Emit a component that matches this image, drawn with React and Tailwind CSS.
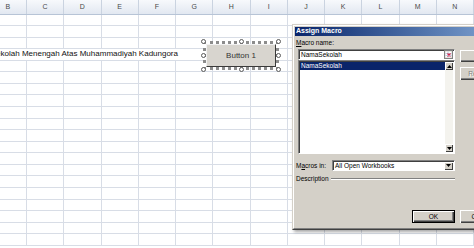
import React from 'react'

const COLS = ['B', 'C', 'D', 'E', 'F', 'G', 'H', 'I', 'J', 'K', 'L', 'M', 'N']
const ROW_COUNT = 20
const TEXT_ROW = 3

function Handle({ className }) {
  return <span className={`absolute w-[5px] h-[5px] rounded-full bg-white border border-[#5a5a5a] ${className}`} />
}

function Arrow({ down }) {
  return (
    <svg width="5" height="3" viewBox="0 0 5 3">
      <path d={down ? 'M0 0h5L2.5 3z' : 'M0 3h5L2.5 0z'} fill="#000" />
    </svg>
  )
}

function ClassicButton({ children, isDefault, disabled, className }) {
  return (
    <div
      className={`${className} bg-[#d4d0c8] flex items-center justify-center text-[6.5px] ${
        isDefault
          ? 'border border-black shadow-[inset_1px_1px_0_#fff,inset_-1px_-1px_0_#404040,inset_-2px_-2px_0_#808080]'
          : 'shadow-[inset_1px_1px_0_#fff,inset_-1px_-1px_0_#404040,inset_-2px_-2px_0_#808080]'
      } ${disabled ? 'text-[#808080] [text-shadow:1px_1px_0_#fff]' : 'text-black'}`}
    >
      {children}
    </div>
  )
}

export default function App() {
  return (
    <div className="relative w-[474px] h-[248px] overflow-hidden bg-white font-['Liberation_Sans',Arial,sans-serif]">

      {/* Sheet */}
      <div className="-ml-[10.25px]">
        <div className="flex h-[14.5px] bg-linear-to-b from-[#f7f9fc] to-[#e2e8f1] border-b border-[#b7c4d6]">
          {COLS.map(c => (
            <div key={c} className="w-[37.25px] shrink-0 h-full border-r border-[#cad3e0] flex items-center justify-center text-[7px] text-[#4a4a4a]">
              {c}
            </div>
          ))}
        </div>

        {Array.from({ length: ROW_COUNT }).map((_, r) => (
          <div key={r} className="flex h-[11.57px] border-b border-[#d8dde6]">
            {r === TEXT_ROW ? (
              <>
                <div className="w-[223.5px] shrink-0 h-full border-r border-[#d8dde6] flex items-center pl-[1px] text-[8px] text-[#111] whitespace-nowrap">
                  Sekolah Menengah Atas Muhammadiyah Kadungora
                </div>
                {COLS.slice(6).map(c => (
                  <div key={c} className="w-[37.25px] shrink-0 h-full border-r border-[#d8dde6]" />
                ))}
              </>
            ) : (
              COLS.map(c => (
                <div key={c} className="w-[37.25px] shrink-0 h-full border-r border-[#d8dde6]" />
              ))
            )}
          </div>
        ))}
      </div>

      {/* Form button, selected */}
      <div className="absolute left-[203px] top-[41px] w-[76px] h-[29px]">
        <div className="w-full h-full border-[3px] border-dotted border-[#8c8c8c]">
          <div className="w-full h-full bg-[#d8d5cf] border border-[#f2f2f2] border-r-[#3a3a3a] border-b-[#3a3a3a] flex items-center justify-center text-[8px] text-[#333]">
            Button 1
          </div>
        </div>
        <Handle className="-left-[2px] -top-[2px]" />
        <Handle className="left-[35.5px] -top-[2px]" />
        <Handle className="left-[73px] -top-[2px]" />
        <Handle className="-left-[2px] top-[12px]" />
        <Handle className="left-[73px] top-[12px]" />
        <Handle className="-left-[2px] top-[26px]" />
        <Handle className="left-[35.5px] top-[26px]" />
        <Handle className="left-[73px] top-[26px]" />
      </div>

      {/* Assign Macro dialog */}
      <div className="absolute left-[292px] top-[24px] w-[268px] h-[206px] bg-[#d4d0c8] border border-[#d4d0c8] border-r-[#404040] border-b-[#404040] shadow-[2px_2px_3px_rgba(0,0,0,0.35)]">
        <div className="h-full border border-white border-r-[#808080] border-b-[#808080] p-[1px] flex flex-col">
          <div className="h-[9px] shrink-0 bg-linear-to-r from-[#0a246a] to-[#a6caf0] flex items-center pl-[1px] text-white font-bold text-[7px]">
            Assign Macro
          </div>

          <div className="flex-1 flex">
            {/* left column */}
            <div className="ml-[3px] w-[157px] shrink-0 flex flex-col">
              <div className="mt-[2px] h-[9px] leading-[9px] -ml-[2px] text-[6.5px] text-black">
                <span className="underline">M</span>acro name:
              </div>

              <div className="mt-[2px] h-[11px] bg-white border border-[#808080] border-r-white border-b-white shadow-[inset_1px_1px_0_#404040] flex items-center pl-[2px] text-[6.5px] text-black">
                <span className="flex-1">NamaSekolah</span>
                <svg width="9" height="9" viewBox="0 0 9 9" className="mr-[1px]">
                  <rect x="0.5" y="0.5" width="8" height="8" fill="#d4d0c8" stroke="#808080" />
                  <rect x="1.5" y="1.5" width="6" height="6" fill="#fff" />
                  <path d="M1.5 3.5h6M1.5 5.5h6M4 1.5v6" stroke="#9bb0cf" strokeWidth="0.6" />
                  <path d="M3.5 3.5l3 3M6.5 3.5l-3 3" stroke="#d6214a" strokeWidth="1.2" />
                </svg>
              </div>

              <div className="h-[94px] bg-white border border-[#808080] border-r-white border-b-white shadow-[inset_1px_1px_0_#404040] flex pl-[1px] pt-[1px] pb-[1px] pr-[1px]">
                <div className="flex-1">
                  <div className="h-[8px] bg-[#0a246a] text-white text-[6.5px] leading-[8px] pl-[1px]">NamaSekolah</div>
                </div>
                <div className="w-[8px] bg-[#f4f3ee] flex flex-col justify-between">
                  <div className="h-[8px] bg-[#d4d0c8] shadow-[inset_1px_1px_0_#fff,inset_-1px_-1px_0_#404040] flex items-center justify-center">
                    <Arrow />
                  </div>
                  <div className="h-[8px] bg-[#d4d0c8] shadow-[inset_1px_1px_0_#fff,inset_-1px_-1px_0_#404040] flex items-center justify-center">
                    <Arrow down />
                  </div>
                </div>
              </div>

              <div className="mt-[6px] h-[11px] flex items-center">
                <span className="-ml-[2px] text-[6.5px] text-black">
                  M<span className="underline">a</span>cros in:
                </span>
                <div className="ml-auto w-[123px] h-full bg-white border border-[#808080] border-r-white border-b-white shadow-[inset_1px_1px_0_#404040] flex items-center pl-[2px] pr-[1px] text-[6.5px] text-black">
                  <span className="flex-1">All Open Workbooks</span>
                  <div className="w-[9px] h-[8px] bg-[#d4d0c8] shadow-[inset_1px_1px_0_#fff,inset_-1px_-1px_0_#404040] flex items-center justify-center">
                    <Arrow down />
                  </div>
                </div>
              </div>

              <div className="mt-[4px] h-[8px] flex items-center">
                <span className="-ml-[2px] text-[6.5px] text-black">Description</span>
                <div className="ml-[2px] flex-1 h-[2px] border-t border-[#808080] border-b border-b-white" />
              </div>

              <ClassicButton isDefault className="mt-auto mb-[4px] self-end w-[43px] h-[13px]">OK</ClassicButton>
            </div>

            {/* right column */}
            <div className="ml-[5px] w-[43px] shrink-0 flex flex-col">
              <ClassicButton className="mt-[14px] h-[12px]">Edit</ClassicButton>
              <ClassicButton disabled className="mt-[5px] h-[13px]">Record...</ClassicButton>
              <ClassicButton className="mt-auto mb-[4px] h-[13px]">Cancel</ClassicButton>
            </div>
          </div>
        </div>
      </div>
    </div>
  )
}
